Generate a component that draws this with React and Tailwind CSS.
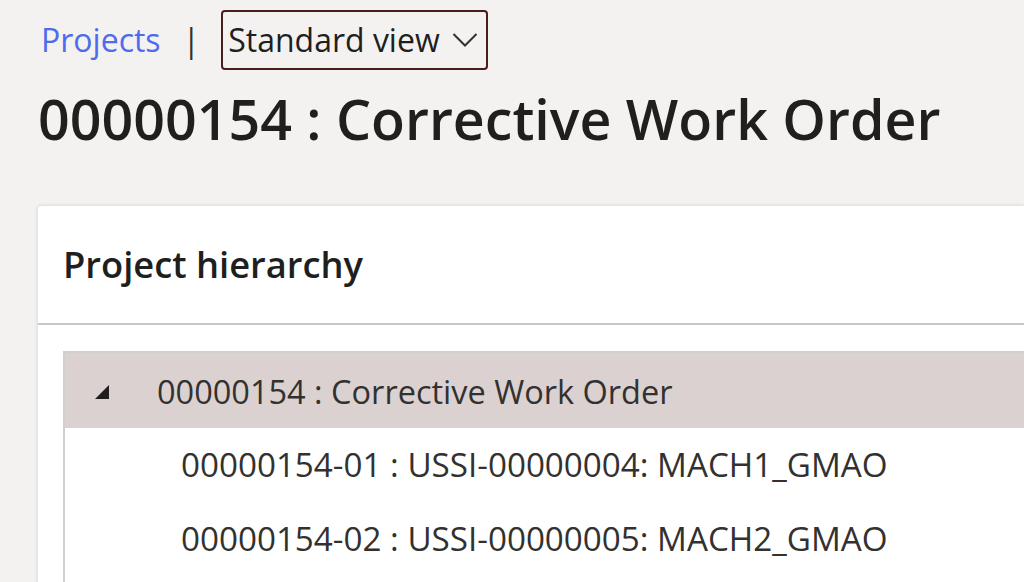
import React from "react";

const font = { fontFamily: '"Open Sans", "Noto Sans", sans-serif' };

const children = [
  "00000154-01 : USSI-00000004: MACH1_GMAO",
  "00000154-02 : USSI-00000005: MACH2_GMAO",
];

const Chevron = () => (
  <svg width="26" height="16" viewBox="0 0 26 16" fill="none" className="ml-[12px]">
    <path d="M1.5 2 L13 13.5 L24.5 2" stroke="#323130" strokeWidth="2" />
  </svg>
);

export default function App() {
  return (
    <div
      className="h-[582px] w-[1024px] overflow-hidden bg-[#f3f2f1] text-[#201f1e]"
      style={font}
    >
      {/* breadcrumb row */}
      <div className="flex items-center pt-[10px] pl-[41px]">
        <span className="text-[32px] leading-none text-[#4f6bed]">Projects</span>
        <span className="ml-[22px] mr-[21px] text-[32px] leading-none text-[#323130]">|</span>
        <button className="flex h-[60px] items-center rounded-[4px] border-2 border-[#4b1c1c] pl-[5px] pr-[8px]">
          <span className="text-[32px] leading-none text-[#201f1e]">Standard view</span>
          <Chevron />
        </button>
      </div>

      {/* title */}
      <h1 className="mt-[10px] pl-[38px] text-[55.5px] font-semibold leading-[78px] text-[#201f1e]">
        00000154 : Corrective Work Order
      </h1>

      {/* card */}
      <div className="ml-[38px] mt-[48px] h-[400px] rounded-tl-[4px] bg-white shadow-[0_0_4px_rgba(0,0,0,0.15)]">
        <div className="flex h-[119px] items-center border-b-2 border-[#c8c6c4] pl-[25px]">
          <h2 className="text-[36.3px] font-semibold text-[#201f1e]">Project hierarchy</h2>
        </div>

        <div className="ml-[25px] mt-[26px] h-[300px] border-l-2 border-t-2 border-[#d2d0ce]">
          <div className="flex h-[75px] items-center bg-[#dbd1d1] pt-[3px]">
            <span className="ml-[30px] mr-[48px] block h-0 w-0 border-b-[14px] border-l-[14px] border-b-[#201f1e] border-l-transparent" />
            <span className="text-[32.5px] text-[#323130]">00000154 : Corrective Work Order</span>
          </div>
          {children.map((c) => (
            <div key={c} className="flex h-[74px] items-center pl-[116px]">
              <span className="text-[33.2px] text-[#323130]">{c}</span>
            </div>
          ))}
        </div>
      </div>
    </div>
  );
}
